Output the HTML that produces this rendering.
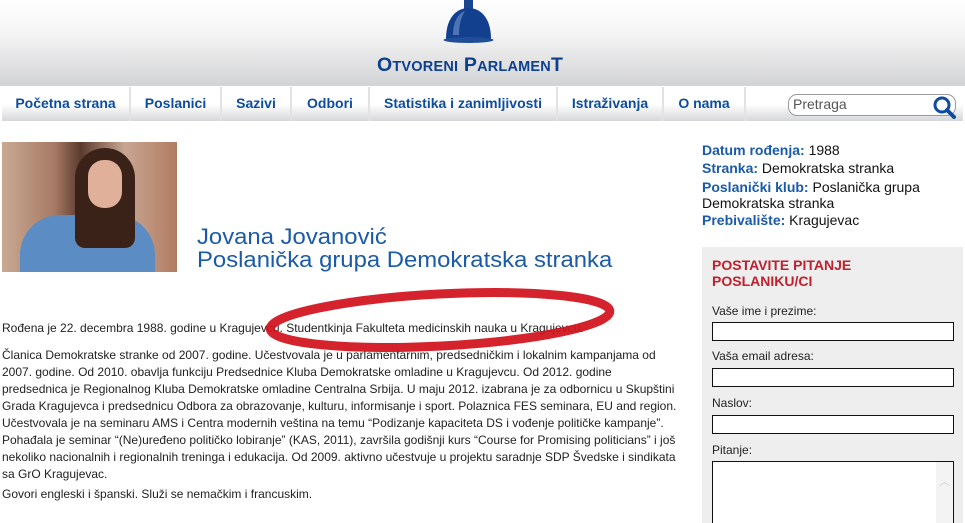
<!DOCTYPE html>
<html><head><meta charset="utf-8"><style>
*{margin:0;padding:0;box-sizing:border-box}
html,body{width:965px;height:523px;overflow:hidden}
body{background:#fff;font-family:"Liberation Sans",Arial,sans-serif;position:relative}
.hdr{position:absolute;left:0;top:0;width:965px;height:86px;background:linear-gradient(#fff 0%,#f4f4f4 40%,#d2d3d5 100%)}
.logo{position:absolute;left:377px;top:54px;color:#0d3f8f;font-weight:bold;font-size:19.5px;letter-spacing:0.2px}
.logo small{font-size:14.5px}
.nav{position:absolute;left:0;top:86px;width:965px;height:36px;background:#fff}
.nav .it{position:absolute;top:1px;height:34px;background:linear-gradient(#fff 0%,#fff 50%,#d6d7d9 100%);color:#0d4c9e;font-weight:bold;font-size:14px;line-height:32px;text-align:center;border-right:2px solid #e2e2e2}
.search{position:absolute;left:788px;top:94px;width:168px;height:22px;border:1px solid #9a9a9a;border-radius:9px;background:#fff;font-size:14px;color:#555;padding-left:4px;line-height:19px}
.t{position:absolute;font-size:12px;color:#222;line-height:17px;white-space:nowrap}
.name{position:absolute;left:197px;top:225px;color:#1a5aa8;font-size:22px;line-height:23px;transform:scaleX(1.085);transform-origin:left top}
.side{position:absolute;left:702px;font-size:14px;color:#111;line-height:16px}
.side b{color:#1a5aa8}
.box{position:absolute;left:702px;top:247px;width:261px;height:276px;background:#eeeeee;overflow:hidden}
.box h3{position:absolute;left:10px;top:10px;color:#c0202e;font-size:14px;line-height:16px}
.lab{position:absolute;left:10px;font-size:12px;color:#222}
.in{position:absolute;left:10px;width:242px;height:19px;border:1px solid #111;background:#fff}
</style></head><body>
<div class="hdr"></div>
<svg style="position:absolute;left:440px;top:0" width="86" height="46" viewBox="0 0 86 46">
<rect x="24" y="0" width="9" height="10" fill="#1a458f"/>
<path d="M6 39 C6 16 18 8 28.5 8 C39 8 51 16 51 39 Z" fill="#12408e"/>
<path d="M13 35 C13 21 19 13 25 11 C21 17 19 25 19 35Z" fill="#4f74b5"/>
<ellipse cx="28.5" cy="40" rx="25" ry="3" fill="#1f4d98"/>
</svg>
<div class="logo">O<small>TVORENI</small> P<small>ARLAMEN</small>T</div>
<div class="nav">
<div class="it" style="left:2px;width:129px">Početna strana</div>
<div class="it" style="left:131px;width:91px">Poslanici</div>
<div class="it" style="left:222px;width:70px">Sazivi</div>
<div class="it" style="left:292px;width:78px">Odbori</div>
<div class="it" style="left:370px;width:188px">Statistika i zanimljivosti</div>
<div class="it" style="left:558px;width:106px">Istraživanja</div>
<div class="it" style="left:664px;width:82px">O nama</div>
<div class="it" style="left:746px;width:217px;border-right:0"></div>
</div>
<div class="search">Pretraga</div>
<svg style="position:absolute;left:932px;top:95px" width="26" height="24" viewBox="0 0 26 24"><circle cx="10" cy="10" r="7" fill="none" stroke="#0d4c9e" stroke-width="3"/><path d="M15 15 L22 22" stroke="#0d4c9e" stroke-width="4" stroke-linecap="round"/></svg>
<div style="position:absolute;left:2px;top:142px;width:175px;height:130px;background:linear-gradient(90deg,#c9a993,#a77a64 30%,#5a3a2e 45%,#c8a693 70%,#b27c62);"></div>
<div style="position:absolute;left:20px;top:215px;width:135px;height:57px;background:#5c8cc4;border-radius:40px 40px 0 0"></div>
<div style="position:absolute;left:75px;top:148px;width:60px;height:100px;background:#3b2218;border-radius:30px 30px 10px 10px"></div>
<div style="position:absolute;left:88px;top:160px;width:34px;height:48px;background:#e0b09b;border-radius:16px"></div>
<div class="name">Jovana Jovanović<br>Poslanička grupa Demokratska stranka</div>
<div class="t" style="left:2px;top:320px">Rođena je 22. decembra 1988. godine u Kragujevcu. Studentkinja Fakulteta medicinskih nauka u Kragujevcu.</div>
<div class="t" style="left:2px;top:347px">Članica Demokratske stranke od 2007. godine. Učestvovala je u parlamentarnim, predsedničkim i lokalnim kampanjama od<br>2007. godine. Od 2010. obavlja funkciju Predsednice Kluba Demokratske omladine u Kragujevcu. Od 2012. godine<br>predsednica je Regionalnog Kluba Demokratske omladine Centralna Srbija. U maju 2012. izabrana je za odbornicu u Skupštini<br>Grada Kragujevca i predsednicu Odbora za obrazovanje, kulturu, informisanje i sport. Polaznica FES seminara, EU and region.<br>Učestvovala je na seminaru AMS i Centra modernih veština na temu “Podizanje kapaciteta DS i vođenje političke kampanje”.<br>Pohađala je seminar “(Ne)uređeno političko lobiranje” (KAS, 2011), završila godišnji kurs “Course for Promising politicians” i još<br>nekoliko nacionalnih i regionalnih treninga i edukacija. Od 2009. aktivno učestvuje u projektu saradnje SDP Švedske i sindikata<br>sa GrO Kragujevac.</div>
<div class="t" style="left:2px;top:486px">Govori engleski i španski. Služi se nemačkim i francuskim.</div>
<svg style="position:absolute;left:250px;top:280px" width="380" height="80" viewBox="0 0 380 80"><ellipse cx="190" cy="40" rx="170" ry="26" fill="none" stroke="#d0101a" stroke-width="9" transform="rotate(-3 190 40)" opacity="0.92"/></svg>
<div class="side" style="top:142px"><b>Datum rođenja:</b> 1988</div>
<div class="side" style="top:160px"><b>Stranka:</b> Demokratska stranka</div>
<div class="side" style="top:179px"><b>Poslanički klub:</b> Poslanička grupa<br>Demokratska stranka</div>
<div class="side" style="top:212px"><b>Prebivalište:</b> Kragujevac</div>
<div class="box">
<h3>POSTAVITE PITANJE<br>POSLANIKU/CI</h3>
<div class="lab" style="top:57px">Vaše ime i prezime:</div>
<div class="in" style="top:75px"></div>
<div class="lab" style="top:102px">Vaša email adresa:</div>
<div class="in" style="top:121px"></div>
<div class="lab" style="top:149px">Naslov:</div>
<div class="in" style="top:168px"></div>
<div class="lab" style="top:196px">Pitanje:</div>
<div class="in" style="top:214px;height:70px"><div style="position:absolute;right:0;top:0;width:17px;height:70px;background:#f3f3f3;color:#ccc;font-size:11px;text-align:center;line-height:40px">︿</div></div>
</div>
</body></html>
